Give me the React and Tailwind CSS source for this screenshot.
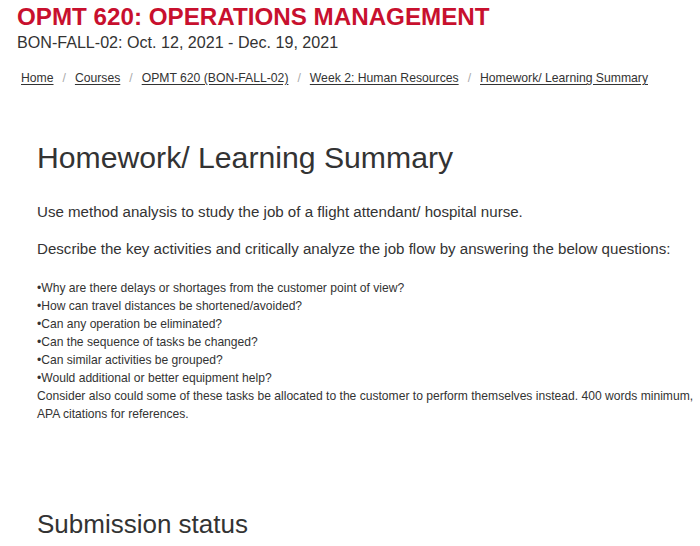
import React from 'react';

const crumbs = [
  'Home',
  'Courses',
  'OPMT 620 (BON-FALL-02)',
  'Week 2: Human Resources',
  'Homework/ Learning Summary',
];

const questions = [
  'Why are there delays or shortages from the customer point of view?',
  'How can travel distances be shortened/avoided?',
  'Can any operation be eliminated?',
  'Can the sequence of tasks be changed?',
  'Can similar activities be grouped?',
  'Would additional or better equipment help?',
];

const App = () => {
  return (
    <div className="w-[700px] h-[546px] overflow-hidden bg-white text-[#333] font-['Liberation_Sans',Arial,sans-serif]">
      <header className="pl-[17px] pt-[2px]">
        <h1 className="text-[24.2px] leading-[29px] font-bold text-[#c8102e]">OPMT 620: OPERATIONS MANAGEMENT</h1>
        <p className="text-[16.1px] leading-[20px] mt-[1px]">BON-FALL-02: Oct. 12, 2021 - Dec. 19, 2021</p>
      </header>

      <nav className="pl-[21px] mt-[19px] flex items-center text-[12.2px] leading-[14px]">
        {crumbs.map((c, i) => (
          <React.Fragment key={c}>
            {i > 0 && <span className="mx-[9px] text-[#aaa]">/</span>}
            <a href="#" className="underline underline-offset-2 text-[#333]">{c}</a>
          </React.Fragment>
        ))}
      </nav>

      <main className="pl-[37px] whitespace-nowrap">
        <h2 className="mt-[55px] text-[30.2px] leading-[35px]">Homework/ Learning Summary</h2>
        <p className="mt-[28px] text-[15.1px] leading-[18px]">Use method analysis to study the job of a flight attendant/ hospital nurse.</p>
        <p className="mt-[19px] text-[15.1px] leading-[18px]">Describe the key activities and critically analyze the job flow by answering the below questions:</p>

        <div className="mt-[21px] text-[12.1px] leading-[18px]">
          {questions.map((q) => (
            <div key={q}>•{q}</div>
          ))}
          <div>Consider also could some of these tasks be allocated to the customer to perform themselves instead. 400 words minimum,</div>
          <div>APA citations for references.</div>
        </div>

        <h2 className="mt-[86px] text-[26px] leading-[30px]">Submission status</h2>
      </main>
    </div>
  );
};

export default App;
